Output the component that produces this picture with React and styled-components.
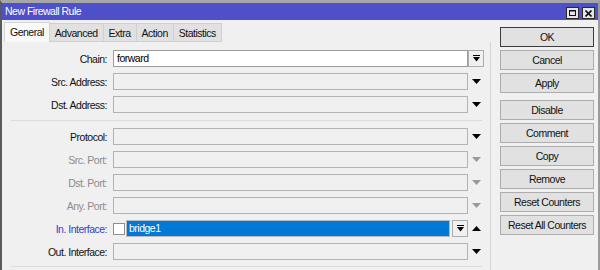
import React from 'react'
import styled, { createGlobalStyle } from 'styled-components'

const GlobalStyle = createGlobalStyle`
  html, body {
    margin: 0;
    padding: 0;
    background: #f0f0f0;
  }
  body {
    font-family: 'Liberation Sans', Arial, sans-serif;
    font-size: 10.5px;
    letter-spacing: -0.5px;
    color: #111;
  }
`

const Window = styled.div`
  width: 600px;
  height: 270px;
  box-sizing: border-box;
  background: #f0f0f0;
  border-top: 3px solid #a7a7a7;
  border-left: 2px solid #5a5a5a;
  border-right: 2px solid #9b9b9b;
  display: flex;
  flex-direction: column;
  overflow: hidden;
`

const TitleBar = styled.div`
  height: 17px;
  background: #4e50c9;
  color: #fff;
  display: flex;
  align-items: center;
  justify-content: space-between;
  padding: 0 3px 0 3px;
`

const Title = styled.span`
  line-height: 17px;
`

const TitleButtons = styled.div`
  display: flex;
  gap: 3px;
  align-self: flex-end;
  padding-bottom: 1px;
`

const TitleButton = styled.div`
  width: 11px;
  height: 10px;
  background: #e6e6e6;
  border: 1px solid #2a2a2a;
  display: flex;
  align-items: center;
  justify-content: center;
`

const Main = styled.div`
  flex: 1;
  display: flex;
`

const LeftPane = styled.div`
  width: 489px;
  display: flex;
  flex-direction: column;
`

const Tabs = styled.div`
  display: flex;
  margin: 3px 0 0 3px;
  height: 19px;
`

const Tab = styled.div`
  padding: 0 5px;
  line-height: 18px;
  box-sizing: border-box;
  height: ${p => (p.$active ? '20px' : '19px')};
  margin-top: ${p => (p.$active ? '-1px' : '0')};
  background: ${p => (p.$active ? '#f9f9f9' : '#e1e1e1')};
  border: 1px solid ${p => (p.$active ? '#d4d4d4' : '#d0d0d0')};
  border-bottom: ${p => (p.$active ? 'none' : '1px solid #d0d0d0')};
  margin-left: -1px;
  color: #111;
`

const Panel = styled.div`
  flex: 1;
  border-right: 1px solid #d5d5d5;
  display: flex;
  flex-direction: column;
  gap: 6px;
  padding-top: 8px;
`

const Row = styled.div`
  display: grid;
  grid-template-columns: 111px 355px 16px;
  height: 17px;
  align-items: center;
`

const Label = styled.div`
  text-align: right;
  padding-right: 6px;
  color: ${p => (p.$tone === 'blue' ? '#3a3ad0' : p.$tone === 'gray' ? '#8c8c8c' : '#111')};
  white-space: nowrap;
`

const Field = styled.div`
  height: 17px;
  box-sizing: border-box;
  border: 1px solid ${p => (p.$white ? '#9c9c9c' : '#b3b3b3')};
  background: ${p => (p.$white ? '#fff' : '#f0f0f0')};
  padding-left: 3px;
  line-height: 15px;
  color: #000;
`

const FieldGroup = styled.div`
  display: flex;
  align-items: center;
  height: 17px;
`

const Check = styled.div`
  width: 12px;
  height: 12px;
  box-sizing: border-box;
  border: 1px solid #8f8f8f;
  background: #fff;
  margin-right: 1px;
`

const Selected = styled.div`
  flex: 1;
  height: 17px;
  box-sizing: border-box;
  border: 1px solid #b9b9b9;
  background: #0078d7;
  color: #fff;
  padding-left: 2px;
  line-height: 15px;
`

const DropBox = styled.div`
  width: 16px;
  height: 17px;
  box-sizing: border-box;
  border: 1px solid #adadad;
  background: #f0f0f0;
  display: flex;
  align-items: center;
  justify-content: center;
  margin-left: ${p => (p.$inline ? '2px' : '0')};
`

const ArrowCell = styled.div`
  display: flex;
  align-items: center;
  justify-content: center;
  height: 17px;
`

const Separator = styled.div`
  height: 1px;
  background: #dcdcdc;
  margin: 1px 8px 1px 9px;
`

const BottomLine = styled.div`
  height: 1px;
  background: #dcdcdc;
  margin: 0 8px 0 9px;
`

const ButtonColumn = styled.div`
  margin-left: 9px;
  padding-top: 7px;
  display: flex;
  flex-direction: column;
  gap: 3px;
  width: 94px;
`

const Button = styled.div`
  height: 20px;
  box-sizing: border-box;
  background: #e1e1e1;
  border: 1px solid ${p => (p.$default ? '#3c3c3c' : '#adadad')};
  text-align: center;
  line-height: 18px;
  color: #111;
  margin-top: ${p => (p.$spaced ? '4px' : '0')};
`

function Arrow({ up, color = '#000' }) {
  return (
    <svg width="9" height="5" viewBox="0 0 9 5">
      <polygon points={up ? '0,5 9,5 4.5,0' : '0,0 9,0 4.5,5'} fill={color} />
    </svg>
  )
}

function DropIcon() {
  return (
    <svg width="7" height="7" viewBox="0 0 7 7">
      <rect x="0" y="0" width="7" height="1" fill="#000" />
      <polygon points="0,2 7,2 3.5,6.5" fill="#000" />
    </svg>
  )
}

const rows = [
  { label: 'Protocol:', tone: 'dark' },
  { label: 'Src. Port:', tone: 'gray' },
  { label: 'Dst. Port:', tone: 'gray' },
  { label: 'Any. Port:', tone: 'gray' },
]

const buttons = ['OK', 'Cancel', 'Apply', 'Disable', 'Comment', 'Copy', 'Remove', 'Reset Counters', 'Reset All Counters']

export default function App() {
  return (
    <>
      <GlobalStyle />
      <Window>
        <TitleBar>
          <Title>New Firewall Rule</Title>
          <TitleButtons>
            <TitleButton>
              <svg width="7" height="6" viewBox="0 0 7 6">
                <rect x="0.5" y="0.5" width="6" height="5" fill="none" stroke="#111" />
                <rect x="0" y="0" width="7" height="1.5" fill="#111" />
              </svg>
            </TitleButton>
            <TitleButton>
              <svg width="7" height="7" viewBox="0 0 7 7">
                <path d="M0.5 0.5 L6.5 6.5 M6.5 0.5 L0.5 6.5" stroke="#111" strokeWidth="1.6" />
              </svg>
            </TitleButton>
          </TitleButtons>
        </TitleBar>
        <Main>
          <LeftPane>
            <Tabs>
              <Tab $active>General</Tab>
              <Tab>Advanced</Tab>
              <Tab>Extra</Tab>
              <Tab>Action</Tab>
              <Tab>Statistics</Tab>
            </Tabs>
            <Panel>
              <Row>
                <Label>Chain:</Label>
                <Field $white>forward</Field>
                <DropBox><DropIcon /></DropBox>
              </Row>
              <Row>
                <Label>Src. Address:</Label>
                <Field />
                <ArrowCell><Arrow /></ArrowCell>
              </Row>
              <Row>
                <Label>Dst. Address:</Label>
                <Field />
                <ArrowCell><Arrow /></ArrowCell>
              </Row>
              <Separator />
              {rows.map(r => (
                <Row key={r.label}>
                  <Label $tone={r.tone}>{r.label}</Label>
                  <Field />
                  <ArrowCell><Arrow color={r.tone === 'gray' ? '#9a9a9a' : '#000'} /></ArrowCell>
                </Row>
              ))}
              <Row>
                <Label $tone="blue">In. Interface:</Label>
                <FieldGroup>
                  <Check />
                  <Selected>bridge1</Selected>
                  <DropBox $inline><DropIcon /></DropBox>
                </FieldGroup>
                <ArrowCell><Arrow up /></ArrowCell>
              </Row>
              <Row>
                <Label>Out. Interface:</Label>
                <Field />
                <ArrowCell><Arrow /></ArrowCell>
              </Row>
              <BottomLine />
            </Panel>
          </LeftPane>
          <ButtonColumn>
            {buttons.map((b, i) => (
              <Button key={b} $default={i === 0} $spaced={b === 'Disable'}>{b}</Button>
            ))}
          </ButtonColumn>
        </Main>
      </Window>
    </>
  )
}
